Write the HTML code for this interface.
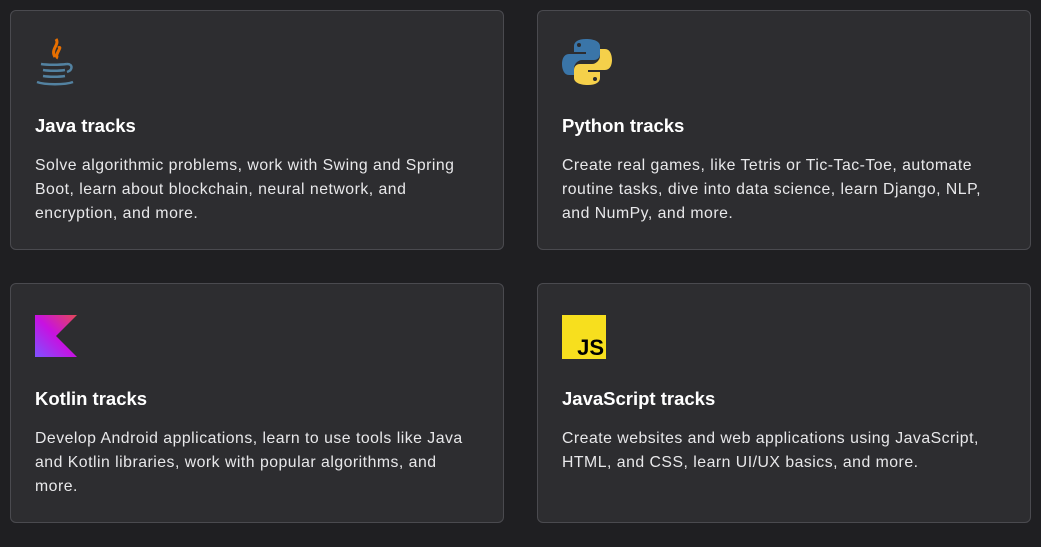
<!DOCTYPE html><html><head><style>
body{margin:0;background:#1f1f22;width:1041px;height:547px;overflow:hidden;font-family:"Liberation Sans",sans-serif;}
.c{position:absolute;width:494px;height:240px;box-sizing:border-box;background:#2d2d30;border:1px solid #4a4a4f;border-radius:6px;}
.ic{position:absolute;left:24px;top:26px;}
h3{position:absolute;left:24px;top:104px;margin:0;color:#fff;font-size:18.5px;font-weight:bold;}
p{position:absolute;left:24px;top:143px;margin:0;color:#e8e8ea;font-size:15.8px;letter-spacing:0.5px;line-height:24px;width:440px;}
</style></head><body>
<div class="c" style="left:10px;top:10px">
<svg class="ic" width="42" height="54" viewBox="0 0 42 54"><path d="M21 2c4 6-6 10-1 18M23 11c6-3-5 8 0 10" stroke="#e76f00" stroke-width="3" fill="none"/><g stroke="#5382a1" stroke-width="2.5" fill="none"><path d="M6 27c6 1 18 1 26 0"/><path d="M8 33c6 1 16 1 22 0"/><path d="M8 39c6 1 16 1 22 0"/><path d="M2 45c8 3 28 3 36 0"/><path d="M32 27c6 0 6 6 0 8"/></g></svg>
<h3>Java tracks</h3><p>Solve algorithmic problems, work with Swing and Spring Boot, learn about blockchain, neural network, and encryption, and more.</p></div>
<div class="c" style="left:537px;top:10px">
<svg class="ic" width="50" height="50" viewBox="0 0 50 50"><path d="M24 2c-8 0-12 3-12 7v6h12v2H7c-5 0-7 5-7 10s2 11 7 11h5v-7c0-4 4-8 8-8h12c4 0 6-3 6-6V9c0-4-5-7-14-7z" fill="#3a75a8"/><circle cx="17" cy="8" r="2" fill="#2b2b2e"/><path d="M26 48c8 0 12-3 12-7v-6H26v-2h17c5 0 7-5 7-10s-2-11-7-11h-5v7c0 4-4 8-8 8H18c-4 0-6 3-6 6v8c0 4 5 7 14 7z" fill="#f5d04a"/><circle cx="33" cy="42" r="2" fill="#2b2b2e"/></svg>
<h3>Python tracks</h3><p>Create real games, like Tetris or Tic-Tac-Toe, automate routine tasks, dive into data science, learn Django, NLP, and NumPy, and more.</p></div>
<div class="c" style="left:10px;top:283px">
<svg class="ic" style="top:31px" width="42" height="42" viewBox="0 0 42 42"><defs><linearGradient id="k" x1="0" y1="1" x2="1" y2="0"><stop offset="0" stop-color="#7f52ff"/><stop offset=".5" stop-color="#c711e1"/><stop offset="1" stop-color="#e44857"/></linearGradient></defs><path d="M0 0h42L21 21l21 21H0z" fill="url(#k)"/></svg>
<h3>Kotlin tracks</h3><p>Develop Android applications, learn to use tools like Java and Kotlin libraries, work with popular algorithms, and more.</p></div>
<div class="c" style="left:537px;top:283px">
<svg class="ic" style="top:31px" width="44" height="44" viewBox="0 0 44 44"><rect width="44" height="44" fill="#f7df1e"/><text x="42" y="40" text-anchor="end" font-family="Liberation Sans" font-weight="bold" font-size="22" fill="#000">JS</text></svg>
<h3>JavaScript tracks</h3><p>Create websites and web applications using JavaScript, HTML, and CSS, learn UI/UX basics, and more.</p></div>
</body></html>
